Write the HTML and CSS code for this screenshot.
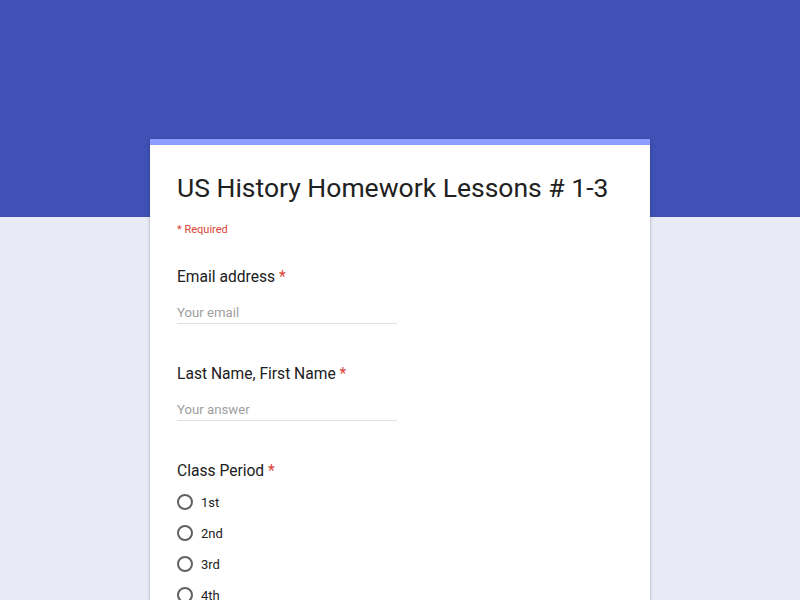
FILE: index.html
```html
<!DOCTYPE html>
<html>
<head>
<meta charset="utf-8">
<link rel="stylesheet" href="styles.css">
</head>
<body>
<div class="header"></div>
<div class="page">
  <div class="card">
    <div class="head">
      <h1 class="title">US History Homework Lessons # 1-3</h1>
      <div class="required">* Required</div>
    </div>
    <div class="question">
      <div class="qlabel">Email address <span class="star">*</span></div>
      <div class="input">Your email</div>
    </div>
    <div class="question">
      <div class="qlabel">Last Name, First Name <span class="star">*</span></div>
      <div class="input">Your answer</div>
    </div>
    <div class="question">
      <div class="qlabel">Class Period <span class="star">*</span></div>
      <div class="options">
        <div class="option"><span class="radio"></span><span class="otext">1st</span></div>
        <div class="option"><span class="radio"></span><span class="otext">2nd</span></div>
        <div class="option"><span class="radio"></span><span class="otext">3rd</span></div>
        <div class="option"><span class="radio"></span><span class="otext">4th</span></div>
      </div>
    </div>
  </div>
</div>
</body>
</html>
```
FILE: styles.css
```css
html, body {
  margin: 0;
  padding: 0;
  height: 100%;
  overflow: hidden;
}
body {
  background: #e8eaf6;
  font-family: Roboto, "Liberation Sans", sans-serif;
  color: #202124;
}
.header {
  height: 217px;
  background: #3f51b5;
}
.page {
  display: flex;
  justify-content: center;
  margin-top: -78px;
}
.card {
  width: 500px;
  background: #fff;
  border-top: 6px solid #8c9eff;
  box-shadow: 0 1px 3px rgba(0,0,0,0.25), 0 0 1px rgba(0,0,0,0.15);
  padding: 0 26px 0 27px;
  box-sizing: border-box;
  height: 600px;
}
.head {
  padding-top: 27px;
}
.title {
  margin: 0;
  font-size: 26.5px;
  line-height: 32px;
  font-weight: 400;
  color: #212121;
}
.required {
  margin-top: 19px;
  font-size: 11px;
  line-height: 14px;
  color: #db4437;
}
.question {
  margin-top: 28px;
}
.question + .question {
  margin-top: 38px;
}
.qlabel {
  font-size: 15.6px;
  line-height: 24px;
  color: #202020;
}
.star {
  color: #db4437;
}
.input {
  margin-top: 14px;
  width: 220px;
  font-size: 13.2px;
  line-height: 20px;
  color: #9e9e9e;
  border-bottom: 1px solid #e0e0e0;
}
.options {
  margin-top: 9px;
  display: flex;
  flex-direction: column;
  gap: 11px;
}
.option {
  display: flex;
  align-items: center;
  height: 20px;
}
.radio {
  width: 12px;
  height: 12px;
  border: 2px solid #616161;
  border-radius: 50%;
  flex: none;
}
.otext {
  margin-left: 8px;
  font-size: 13px;
  color: #212121;
}
```
